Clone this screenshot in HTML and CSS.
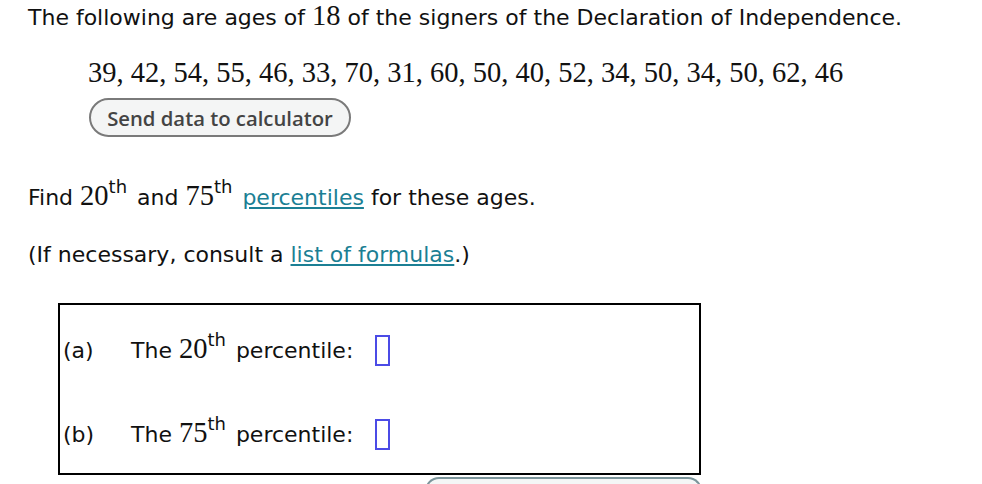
FILE: index.html
```html
<!DOCTYPE html>
<html lang="en">
<head>
  <meta charset="UTF-8">
  <title>Percentiles</title>
  <link rel="stylesheet" href="styles.css">
</head>
<body>
  <div class="container">
    <p class="intro">The following are ages of <span class="num">18</span> of the signers of the Declaration of Independence.</p>

    <div class="data">39, 42, 54, 55, 46, 33, 70, 31, 60, 50, 40, 52, 34, 50, 34, 50, 62, 46</div>
    <button class="calc-btn">Send data to calculator</button>

    <p class="find">Find <span class="num">20</span><sup>th</sup> and <span class="num">75</span><sup>th</sup> <a href="#">percentiles</a> for these ages.</p>

    <p class="note">(If necessary, consult a <a href="#">list of formulas</a>.)</p>

    <div class="answer-box">
      <div class="answer-row">
        <span class="label">(a)</span>
        <span class="question">The <span class="num">20</span><sup>th</sup> percentile:</span>
        <span class="input-box"></span>
      </div>
      <div class="answer-row">
        <span class="label">(b)</span>
        <span class="question">The <span class="num">75</span><sup>th</sup> percentile:</span>
        <span class="input-box"></span>
      </div>
    </div>
    <div class="bottom-btn"></div>
  </div>
</body>
</html>
```

FILE: styles.css
```css
body {
  margin: 0;
  font-family: "DejaVu Sans", Verdana, sans-serif;
  font-size: 22px;
  color: #111;
  background-color: #fff;
  overflow: hidden;
}
.container {
  padding: 2px 0 0 28px;
}
p {
  margin: 0;
}
span.num {
  font-family: "Liberation Serif", "Times New Roman", serif;
  font-size: 28.5px;
  line-height: 20px;
}
sup {
  font-size: 18px;
  vertical-align: 12px;
  line-height: 0;
  margin-right: 3px;
}
a {
  color: #1b7f94;
  text-decoration: underline;
}
.intro {
  line-height: 32px;
}
.data {
  font-family: "Liberation Serif", "Times New Roman", serif;
  font-size: 28.5px;
  margin: 22px 0 0 60px;
  line-height: 34px;
}
.calc-btn {
  display: block;
  margin: 8px 0 0 61px;
  width: 262px;
  height: 39px;
  border: 2px solid #7a7a7a;
  border-radius: 20px;
  background-color: #f4f5f5;
  color: #444;
  font-family: "Open Sans", Arial, sans-serif;
  font-weight: 600;
  font-size: 20.3px;
  padding: 0;
}
.find {
  margin-top: 45px;
  line-height: 32px;
}
.note {
  margin-top: 25px;
  line-height: 32px;
}
.answer-box {
  margin: 32px 0 0 30px;
  border: 2px solid #000;
  display: flex;
  flex-direction: column;
  gap: 52px;
  padding: 29px 0 0 3px;
  box-sizing: border-box;
  height: 172px;
  width: 643px;
}
.answer-row {
  display: flex;
  align-items: center;
  height: 32px;
}
.label {
  width: 68px;
}
.question {
  margin-right: 22px;
}
.input-box {
  width: 11px;
  height: 27px;
  border: 2px solid #4b4be6;
}
.bottom-btn {
  margin: 2px 0 0 397px;
  width: 273px;
  height: 20px;
  border: 2px solid #7b959b;
  border-radius: 14px 14px 0 0;
  border-bottom: none;
  background-color: #f4f6f6;
}
```
